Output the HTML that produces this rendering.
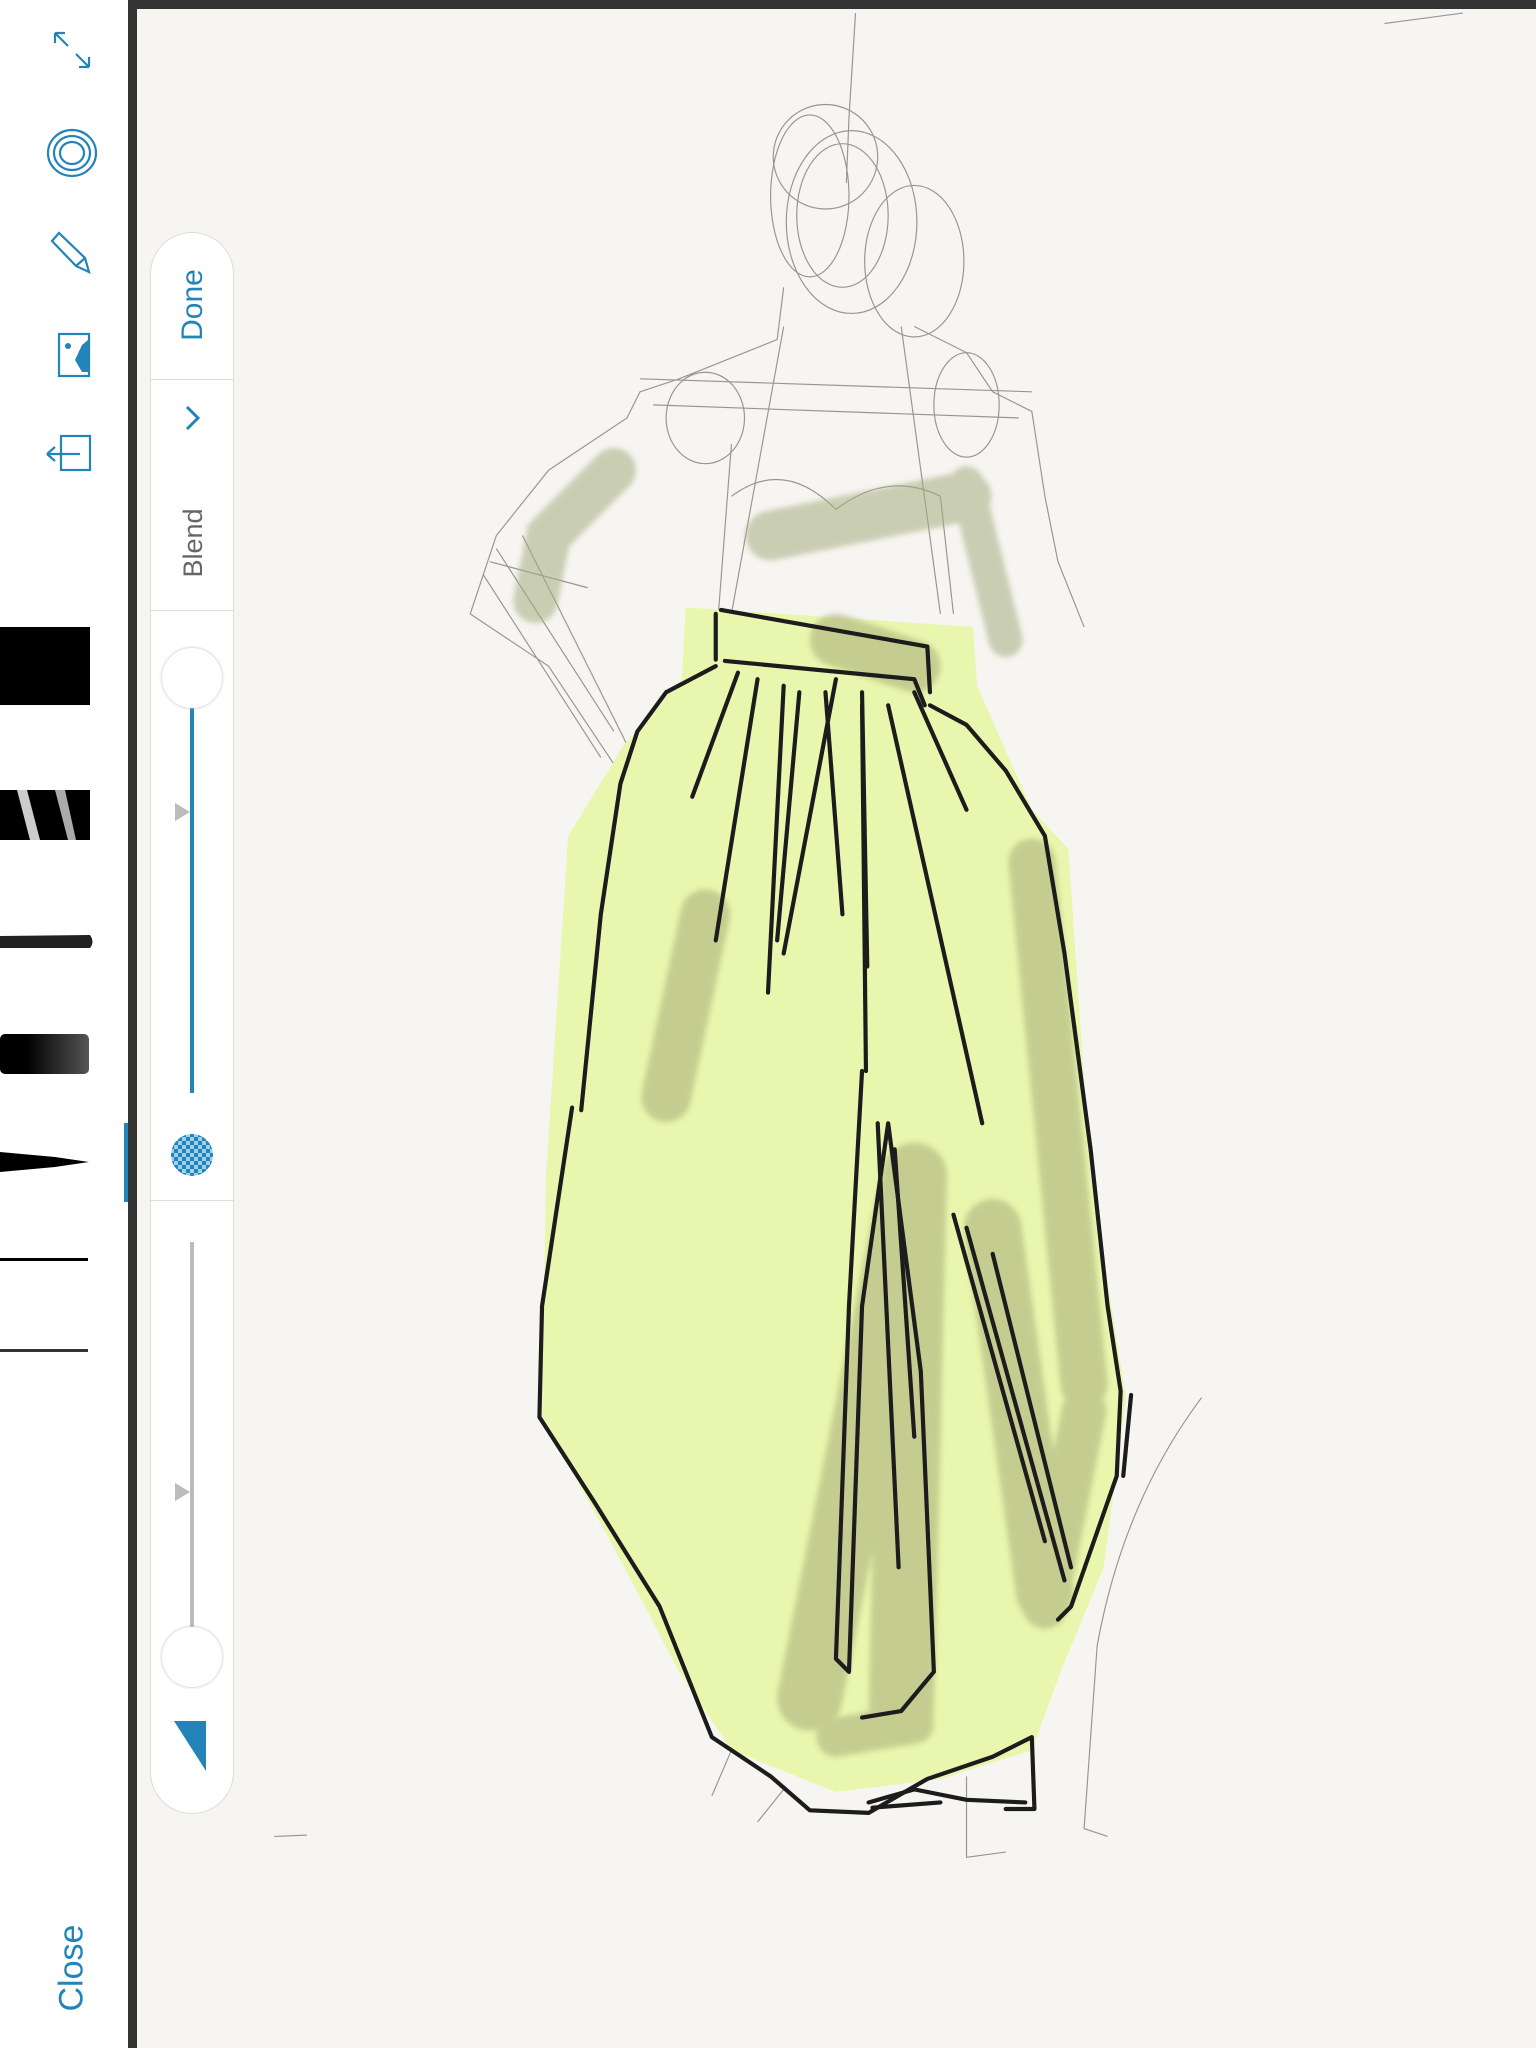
<!DOCTYPE html>
<html><head><meta charset="utf-8"><style>
html,body{margin:0;padding:0}
body{width:1536px;height:2048px;position:relative;overflow:hidden;background:#fff;font-family:"Liberation Sans",sans-serif}
#side{position:absolute;left:0;top:0;width:128px;height:2048px;background:#fff}
#bar{position:absolute;left:128px;top:0;width:9px;height:2048px;background:#333}
#topbar{position:absolute;left:128px;top:0;width:1408px;height:9px;background:#333}
#canvas{position:absolute;left:137px;top:9px;width:1399px;height:2039px;background:#f6f5f1}
svg.full{position:absolute;left:0;top:0}
#panel{position:absolute;left:150px;top:232px;width:84px;height:1582px;background:#fff;border:1px solid #ddd;border-radius:42px;box-sizing:border-box}
.div{position:absolute;left:0;width:100%;height:1px;background:#ddd}
.rot{position:absolute;transform:rotate(-90deg);transform-origin:center;white-space:nowrap}
</style></head><body>
<div id="side"></div>
<div id="canvas"></div>
<div id="bar"></div>
<div id="topbar"></div>

<svg class="full" width="1536" height="2048" viewBox="0 0 1176 1568">
 <defs><filter id="bl" x="-20%" y="-20%" width="140%" height="140%"><feGaussianBlur stdDeviation="2"/></filter></defs>
 <g fill="none" stroke="#777" stroke-width="0.9" opacity="0.75">
  <path d="M655 10 L650 90 L648 140"/>
  <ellipse cx="645" cy="165" rx="35" ry="55"/>
  <ellipse cx="652" cy="170" rx="50" ry="70"/>
  <ellipse cx="700" cy="200" rx="38" ry="58"/>
  <ellipse cx="620" cy="150" rx="30" ry="62"/>
  <ellipse cx="632" cy="120" rx="40" ry="40"/>
  <path d="M600 220 L595 260 L520 290 L490 300 L480 320 L420 360 L380 410 L360 470 L420 510 L480 600"/>
  <path d="M700 250 L740 270 L760 300 L790 315 L800 380 L810 430 L830 480"/>
  <path d="M490 290 L790 300 M500 310 L780 320"/>
  <ellipse cx="540" cy="320" rx="30" ry="35"/>
  <ellipse cx="740" cy="310" rx="25" ry="40"/>
  <path d="M560 380 Q600 350 640 390 Q680 360 720 380 L730 470"/>
  <path d="M380 420 L470 560 M370 440 L460 580 M400 410 L490 590 M375 430 L450 450"/>
  <path d="M560 340 L550 470 M600 250 L560 470 M690 250 L720 470"/>
  <path d="M920 1070 Q860 1150 840 1260 L830 1400 L848 1406"/>
  <path d="M1060 18 L1120 10 M210 1406 L235 1405 M560 1340 L545 1375 M600 1370 L580 1395 M740 1360 L740 1422 L770 1418"/>
 </g>
 <g stroke="#a6ad80" stroke-linecap="round" fill="none" opacity="0.55" filter="url(#bl)">
  <path d="M470 360 L420 410 L410 460" stroke-width="34"/>
  <path d="M590 410 L740 380" stroke-width="38"/>
  <path d="M740 370 L770 490" stroke-width="26"/>
 </g>
 <path d="M525 465 L745 480 L748 525 L790 620 L818 650 L835 900 L862 1070 L845 1200 L812 1280 L790 1340 L720 1362 L640 1372 L560 1340 L520 1280 L470 1185 L415 1085 L418 900 L435 640 L478 570 L522 520 Z" fill="#e9f6ad"/>
 <g stroke="#a6ad78" stroke-linecap="round" fill="none" opacity="0.55" filter="url(#bl)">
  <path d="M640 490 L700 510" stroke-width="40"/>
  <path d="M540 700 L510 840" stroke-width="38"/>
  <path d="M700 900 L620 1300" stroke-width="50"/>
  <path d="M700 900 L690 1310" stroke-width="50"/>
  <path d="M760 940 L800 1220" stroke-width="44"/>
  <path d="M790 660 L830 1060" stroke-width="36"/>
  <path d="M830 1080 L800 1230" stroke-width="34"/>
  <path d="M640 1330 L700 1320" stroke-width="30"/>
 </g>
 <g fill="none" stroke="#1c1c1c" stroke-width="3.2" stroke-linecap="round" stroke-linejoin="round">
  <path d="M548 470 L548 505 M552 467 L710 495 L712 530"/>
  <path d="M555 506 L700 520 L708 540"/>
  <path d="M548 510 L510 530 L488 560 L475 600 L460 700 L445 850 M438 848 L415 1000 L413 1085 L455 1150 L505 1230 L545 1330 L590 1360 L620 1386 L665 1388 L710 1362 L760 1345 L790 1330 L792 1385 L770 1385"/>
  <path d="M712 540 L740 555 L770 590 L800 640 L815 730 L835 880 L848 1000 L858 1065 L855 1130 L820 1230 L810 1240"/>
  <path d="M866 1068 L860 1130"/>
  <path d="M565 515 L530 610 M580 520 L548 720 M600 525 L588 760 M612 530 L595 720 M640 520 L600 730 M660 530 L664 740 M632 530 L645 700 M700 530 L740 620 M680 540 L752 860"/>
  <path d="M660 540 L663 820 M660 820 L650 1000 L640 1270 L650 1280 L660 1000 L680 860 L705 1050 L715 1280 L690 1310 L660 1315"/>
  <path d="M672 860 L688 1200 M685 880 L700 1100 M730 930 L800 1180 M740 940 L815 1210 M760 960 L820 1200"/>
  <path d="M665 1380 L700 1370 L740 1378 L785 1380 M668 1384 L720 1380"/>
 </g>
</svg>

<svg class="full" width="128" height="600" viewBox="0 0 128 600">
 <g fill="none" stroke="#2384b8" stroke-width="2.2">
  <path d="M55 33 L68 46 M55 33 L55 43 M55 33 L65 33 M76 54 L89 67 M89 67 L89 57 M89 67 L79 67"/>
  <ellipse cx="72" cy="153" rx="24" ry="23"/><ellipse cx="72" cy="153" rx="18" ry="17"/><ellipse cx="72" cy="153" rx="12" ry="11"/>
  <path d="M52 241 L59 233 L85 258 L89 272 L76 266 Z M76 266 L85 258"/>
  <rect x="59" y="334" width="30" height="42"/>
  <path d="M47 454 L80 454 M47 454 L55 447 M47 454 L55 461"/>
  <rect x="61" y="436" width="29" height="34"/>
 </g>
 <circle cx="68" cy="346" r="3" fill="#2384b8"/>
 <path d="M82 345 L75 360 L82 372 L88 372 L88 340 Z" fill="#2384b8"/>
</svg>

<div style="position:absolute;left:0;top:627px;width:90px;height:78px;background:#000"></div>
<svg class="full" style="top:790px" width="128" height="600" viewBox="0 0 128 600">
 <rect x="0" y="0" width="90" height="50" fill="#000"/>
 <path d="M17 0 L27 0 L40 50 L30 50 Z" fill="#ccc"/>
 <path d="M55 0 L65 0 L76 50 L68 50 Z" fill="#aaa"/>
 <defs><linearGradient id="g1"><stop offset="0.3" stop-color="#000"/><stop offset="1" stop-color="#555"/></linearGradient></defs>
 <path d="M0 146 L90 145 Q95 152 90 158 L0 158 Z" fill="#222"/>
 <rect x="0" y="244" width="89" height="40" rx="5" fill="url(#g1)"/>
 <path d="M0 362 L55 367 L89 372 L55 377 L0 382 Z" fill="#000"/>
 <rect x="0" y="468" width="88" height="3" fill="#000"/>
 <rect x="0" y="559" width="88" height="3" fill="#333"/>
</svg>
<div style="position:absolute;left:124px;top:1123px;width:4px;height:79px;background:#2384b8"></div>

<div class="rot" style="left:40px;top:1960px;width:64px;text-align:center;font-size:34px;color:#2384b8">Close</div>

<div id="panel">
 <div class="div" style="top:146px"></div>
 <div class="div" style="top:377px"></div>
 <div class="div" style="top:967px"></div>
 <div class="rot" style="left:2px;top:52px;width:80px;height:40px;line-height:40px;text-align:center;font-size:30px;color:#2384b8">Done</div>
 <svg style="position:absolute;left:30px;top:170px" width="24" height="30"><path d="M6 4 L17 15 L6 26" fill="none" stroke="#2384b8" stroke-width="3"/></svg>
 <div class="rot" style="left:2px;top:290px;width:80px;height:40px;line-height:40px;text-align:center;font-size:27px;color:#666">Blend</div>
 <div style="position:absolute;left:39px;top:470px;width:4px;height:390px;background:#2384b8"></div>
 <div style="position:absolute;left:11px;top:415px;width:60px;height:60px;border-radius:50%;background:#fff;box-shadow:0 0 3px #bbb"></div>
 <svg style="position:absolute;left:24px;top:570px" width="16" height="18"><path d="M0 0 L15 9 L0 18 Z" fill="#bbb"/></svg>
 <svg style="position:absolute;left:19px;top:900px" width="44" height="44"><defs><pattern id="ck" width="8" height="8" patternUnits="userSpaceOnUse"><rect width="8" height="8" fill="#2384b8"/><rect width="4" height="4" fill="#9fd0ee"/><rect x="4" y="4" width="4" height="4" fill="#9fd0ee"/></pattern></defs><circle cx="22" cy="22" r="21" fill="url(#ck)"/></svg>
 <div style="position:absolute;left:39px;top:1009px;width:4px;height:390px;background:#bbb"></div>
 <div style="position:absolute;left:11px;top:1394px;width:60px;height:60px;border-radius:50%;background:#fff;box-shadow:0 0 3px #bbb"></div>
 <svg style="position:absolute;left:24px;top:1250px" width="16" height="18"><path d="M0 0 L15 9 L0 18 Z" fill="#bbb"/></svg>
 <svg style="position:absolute;left:23px;top:1486px" width="36" height="54"><path d="M0 2 L32 2 L32 52 Z" fill="#2384b8"/></svg>
</div>
</body></html>
